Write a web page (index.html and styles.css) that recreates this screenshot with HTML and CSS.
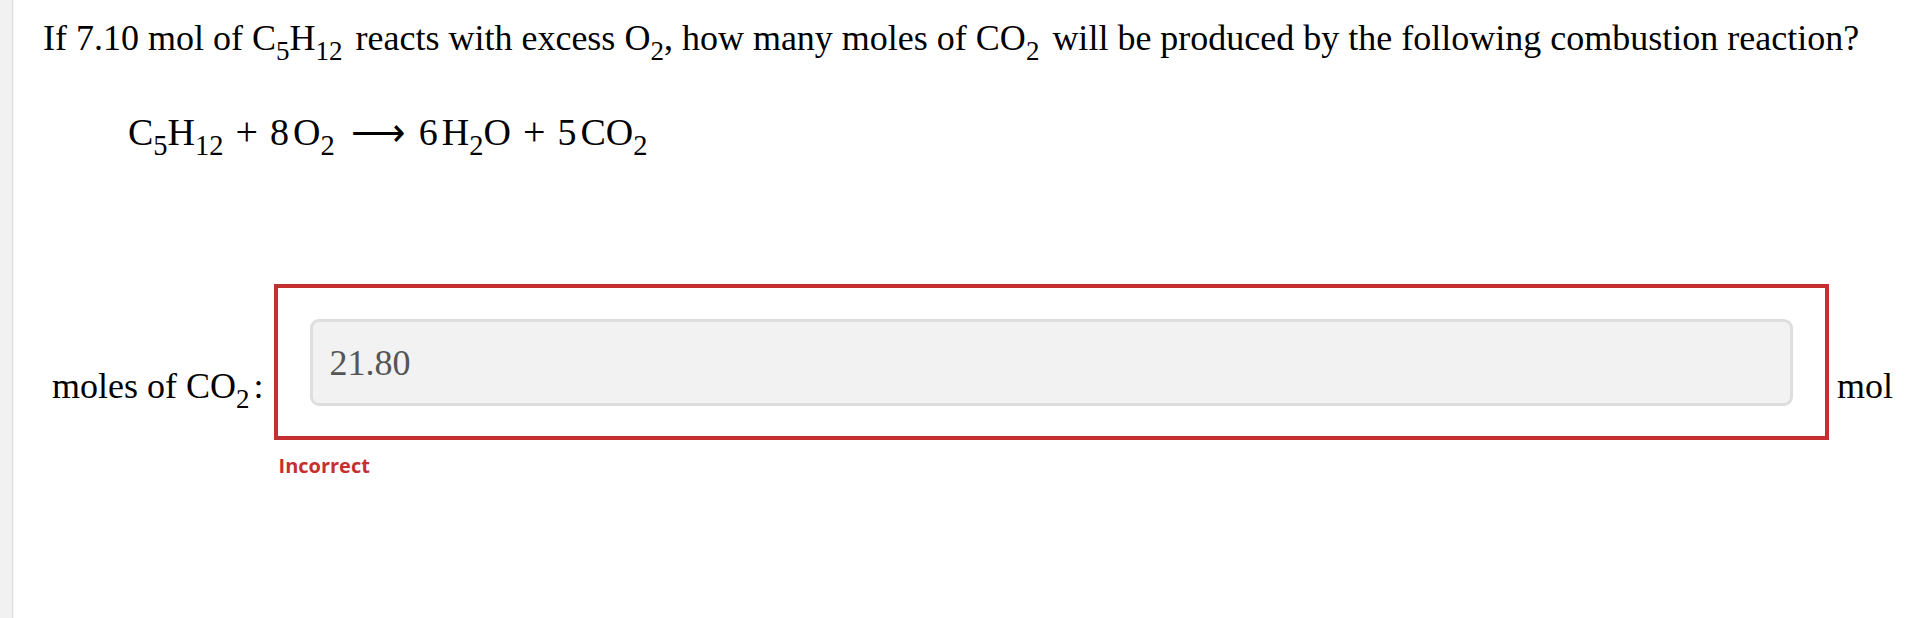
FILE: index.html
```html
<!DOCTYPE html>
<html lang="en">
<head>
<meta charset="utf-8">
<title>Stoichiometry question</title>
<link rel="stylesheet" href="styles.css">
</head>
<body>
<div class="page">
  <div class="rail"></div>
  <main class="content">
    <p class="question">If 7.10 mol of <span class="math gap">C<sub>5</sub>H<sub>12</sub></span> reacts with excess <span class="math">O<sub>2</sub></span>, how many moles of <span class="math gap">CO<sub>2</sub></span> will be produced by the following combustion reaction?</p>
    <p class="equation"><span class="math">C<sub>5</sub>H<sub>12</sub><span class="op">+</span>8<span class="thin"></span>O<sub>2</sub><span class="arrow">⟶</span>6<span class="thin"></span>H<sub>2</sub>O<span class="op">+</span>5<span class="thin"></span>CO<sub>2</sub></span></p>
    <div class="answer-row">
      <label class="label" for="answer">moles of <span class="math">CO<sub>2</sub></span><span class="colon">:</span></label>
      <div class="field">
        <div class="field-box">
          <input id="answer" class="input" type="text" value="21.80" readonly>
        </div>
        <div class="feedback">Incorrect</div>
      </div>
      <span class="unit">mol</span>
    </div>
  </main>
</div>
</body>
</html>
```

FILE: styles.css
```css
html, body {
  margin: 0;
  padding: 0;
  background: #ffffff;
}

body {
  font-family: "Liberation Serif", "Times New Roman", serif;
  color: #000;
}

.page {
  display: flex;
  min-height: 618px;
}

.rail {
  width: 12px;
  flex: none;
  background: #f1f1f1;
  border-right: 1px solid #dcdcdc;
  box-shadow: 1px 0 1px rgba(0, 0, 0, 0.04);
}

.content {
  flex: 1;
  padding-left: 30px;
  padding-right: 19px;
}

.question {
  margin: 16px 0 0;
  font-size: 36px;
  line-height: 44px;
  white-space: nowrap;
}

.math sub {
  font-size: 0.75em;
  line-height: 0;
  vertical-align: -0.36em;
}

.math.gap {
  margin-right: 4px;
}

.equation {
  margin: 50px 0 0;
  padding-left: 85px;
  font-size: 38px;
  line-height: 44px;
  white-space: nowrap;
}

.op {
  margin: 0 12px;
  font-size: 1.05em;
  line-height: 0;
}

.arrow {
  margin: 0 14px 0 16px;
  line-height: 0;
}

.thin {
  display: inline-block;
  width: 4px;
}

.answer-row {
  display: flex;
  align-items: flex-start;
  margin-top: 130px;
}

.label {
  font-size: 36px;
  line-height: 44px;
  margin-top: 80px;
  margin-right: 10px;
  padding-left: 9px;
  white-space: nowrap;
}

.colon {
  margin-left: 4px;
}

.field {
  flex: 1;
  display: flex;
  flex-direction: column;
  align-items: flex-start;
}

.field-box {
  align-self: stretch;
  border: 4px solid #c62f2f;
  padding: 31px 32px 30px;
}

.input {
  display: block;
  box-sizing: border-box;
  width: 100%;
  height: 87px;
  margin: 0;
  padding: 0 17px;
  border: 3px solid #dedede;
  border-radius: 9px;
  background: #f2f2f2;
  color: #555555;
  font-family: "Liberation Serif", "Times New Roman", serif;
  font-size: 36px;
  outline: none;
}

.feedback {
  margin-top: 12px;
  margin-left: 5px;
  font-family: "Open Sans", "Noto Sans", sans-serif;
  font-weight: 700;
  font-size: 20px;
  line-height: 28px;
  color: #c62f2f;
}

.unit {
  font-size: 36px;
  line-height: 44px;
  margin-top: 80px;
  margin-left: 8px;
}
```
